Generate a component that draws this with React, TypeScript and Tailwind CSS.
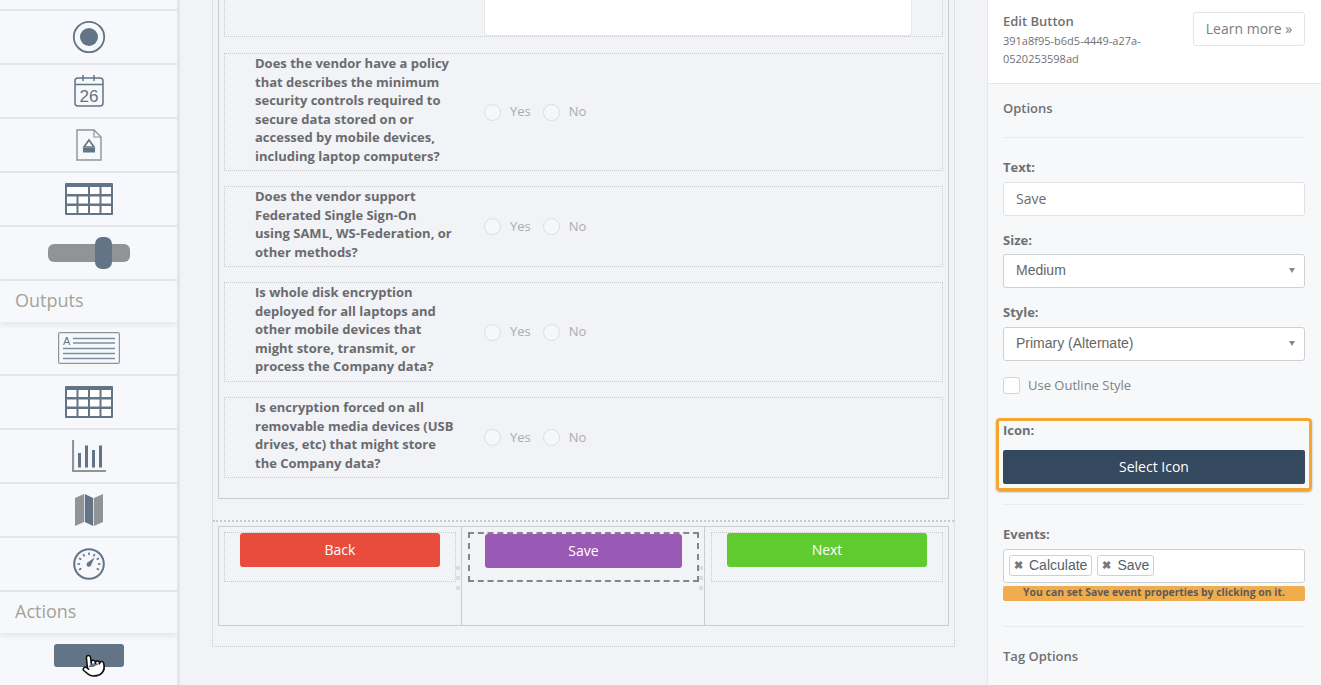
import React from "react";
import { Pointer } from "lucide-react";

const SLATE = "#637487";
const GRAY = "#929396";

const questions = [
  {
    text: "Does the vendor have a policy that describes the minimum security controls required to secure data stored on or accessed by mobile devices, including laptop computers?",
    height: "h-[118px]",
  },
  {
    text: "Does the vendor support Federated Single Sign-On using SAML, WS-Federation, or other methods?",
    height: "h-[81px]",
  },
  {
    text: "Is whole disk encryption deployed for all laptops and other mobile devices that might store, transmit, or process the Company data?",
    height: "h-[100px]",
  },
  {
    text: "Is encryption forced on all removable media devices (USB drives, etc) that might store the Company data?",
    height: "h-[81px]",
  },
];

function SideRow({ children }: { children: React.ReactNode }) {
  return (
    <div className="flex h-[54px] shrink-0 items-center justify-center border-b-2 border-[#e4e5e9]">
      {children}
    </div>
  );
}

function SideHeader({ label }: { label: string }) {
  return (
    <div className="relative z-10 flex h-[41px] shrink-0 items-center pb-[2px] pl-[15px] text-[18px] text-[#a3a399] shadow-[0_3px_6px_rgba(0,0,0,0.08)]">
      {label}
    </div>
  );
}

function RadioIcon() {
  return (
    <svg width="34" height="34" viewBox="0 0 34 34">
      <circle cx="17" cy="17" r="15.2" fill="none" stroke={SLATE} strokeWidth="1.8" />
      <circle cx="17" cy="17" r="9" fill={SLATE} />
    </svg>
  );
}

function CalendarIcon() {
  return (
    <svg width="30" height="32" viewBox="0 0 30 32">
      <rect x="1" y="3" width="28" height="28" rx="3" fill="none" stroke={SLATE} strokeWidth="1.5" />
      <path d="M1 9.5H29M9 0V6M20 0V6" stroke={SLATE} strokeWidth="1.5" />
      <text x="15" y="27" textAnchor="middle" fontSize="17" fill={SLATE} fontFamily="'Liberation Sans', sans-serif">
        26
      </text>
    </svg>
  );
}

function FileIcon() {
  return (
    <svg width="26" height="32" viewBox="0 0 26 32">
      <path d="M1 1H18L25 8V31H1Z" fill="none" stroke={GRAY} strokeWidth="1.4" />
      <path d="M18 1V8H25" fill="none" stroke={GRAY} strokeWidth="1.2" />
      <path d="M13 11L18 18H8Z" fill="none" stroke={SLATE} strokeWidth="1.6" />
      <rect x="7" y="19" width="12" height="4.5" fill={SLATE} />
    </svg>
  );
}

function GridIcon({ header }: { header?: boolean }) {
  const cols = [2, 13.5, 25, 36.5];
  const rows = [4, 13.5, 23];
  return (
    <svg width="48" height="32" viewBox="0 0 48 32">
      <rect width="48" height="32" rx="1" fill={SLATE} />
      {rows.map((y, r) =>
        cols.map((x, c) =>
          header && r === 0 && c < 2 ? null : (
            <rect key={`${r}-${c}`} x={x} y={y} width="9.5" height="7" fill="#fff" />
          )
        )
      )}
      {header ? <rect x="2" y="4" width="21" height="7" fill="#fff" /> : null}
    </svg>
  );
}

function SliderIcon() {
  return (
    <div className="relative h-[32px] w-[82px]">
      <div className="absolute top-[7px] h-[18px] w-[82px] rounded-[6px] bg-[#929396]" />
      <div className="absolute left-[47px] h-[32px] w-[17px] rounded-[7px] bg-[#637487]" />
    </div>
  );
}

function DocIcon() {
  return (
    <svg width="62" height="32" viewBox="0 0 62 32">
      <rect x="0.6" y="0.6" width="60.8" height="30.8" rx="1.5" fill="none" stroke={GRAY} strokeWidth="1.2" />
      <text x="5" y="13" fontSize="11" fill={SLATE} fontFamily="'Liberation Sans', sans-serif">
        A
      </text>
      <path d="M15 6.5H57M15 11H57" stroke="#7e8ea1" strokeWidth="1.3" />
      <path d="M5 16.5H57M5 21.5H57M5 26.5H57" stroke="#7e8ea1" strokeWidth="1.4" />
    </svg>
  );
}

function ChartIcon() {
  return (
    <svg width="34" height="32" viewBox="0 0 34 32">
      <path d="M1 0V31H34" fill="none" stroke={GRAY} strokeWidth="2.2" />
      <path d="M7.5 13V27.5M14.5 5.5V27.5M21.5 10V27.5M28.5 5.5V27.5" stroke={SLATE} strokeWidth="3" />
    </svg>
  );
}

function MapIcon() {
  return (
    <svg width="28" height="32" viewBox="0 0 28 32">
      <path d="M0 4L9 0V28L0 32Z" fill={GRAY} />
      <path d="M9.8 0L18.2 4V32L9.8 28Z" fill={SLATE} />
      <path d="M19 4L28 0V28L19 32Z" fill={GRAY} />
    </svg>
  );
}

function GaugeIcon() {
  const ticks = [-120, -90, -60, -30, 0, 30, 60, 90, 120];
  return (
    <svg width="32" height="32" viewBox="0 0 32 32">
      <circle cx="16" cy="16" r="14.8" fill="none" stroke={SLATE} strokeWidth="2" />
      {ticks.map((a) => (
        <rect key={a} x="15.2" y="4.5" width="1.6" height="2.6" fill={SLATE} transform={`rotate(${a} 16 16)`} />
      ))}
      <path d="M21.5 9.5L17.6 18L14 15Z" fill={SLATE} />
      <circle cx="15.8" cy="16.5" r="2.2" fill={SLATE} />
    </svg>
  );
}

function Sidebar() {
  return (
    <aside className="flex h-[685px] w-[180px] shrink-0 flex-col overflow-hidden border-r-[3px] border-[#e4e5e9] bg-[#f7f8fb]">
      <div className="h-[11px] shrink-0 border-b-2 border-[#e4e5e9]" />
      <SideRow><RadioIcon /></SideRow>
      <SideRow><CalendarIcon /></SideRow>
      <SideRow><FileIcon /></SideRow>
      <SideRow><GridIcon header /></SideRow>
      <SideRow><SliderIcon /></SideRow>
      <SideHeader label="Outputs" />
      <SideRow><DocIcon /></SideRow>
      <SideRow><GridIcon /></SideRow>
      <SideRow><ChartIcon /></SideRow>
      <SideRow><MapIcon /></SideRow>
      <SideRow><GaugeIcon /></SideRow>
      <SideHeader label="Actions" />
      <div className="relative flex justify-center pt-[11px]">
        <div className="h-[23px] w-[70px] rounded-[3px] bg-[#637487]" />
        <Pointer
          size={25}
          fill="#fff"
          stroke="#111"
          strokeWidth={1.5}
          className="absolute left-[81px] top-[20px] -rotate-6"
        />
      </div>
    </aside>
  );
}

function Radio({ label }: { label: string }) {
  return (
    <div className="flex items-center">
      <span className="h-[17px] w-[17px] rounded-full border border-[#dcdde0] bg-[#f6f7f9]" />
      <span className="ml-[9px] text-[13px] text-[#a9acb1]">{label}</span>
    </div>
  );
}

function Question({ text, height }: { text: string; height: string }) {
  return (
    <div className={`mb-[15px] flex items-center border border-dotted border-[#c9cacd] ${height}`}>
      <p className="ml-[30px] w-[199px] self-start text-[13px] font-bold leading-[18.5px] text-[#6b6b6e]">{text}</p>
      <div className="ml-[30px] flex gap-[12px]">
        <Radio label="Yes" />
        <Radio label="No" />
      </div>
    </div>
  );
}

function ActionCell({
  label,
  color,
  padding,
  buttonWidth = "w-[200px]",
  selected,
  handles = true,
  last,
}: {
  label: string;
  color: string;
  padding: string;
  buttonWidth?: string;
  selected?: boolean;
  handles?: boolean;
  last?: boolean;
}) {
  return (
    <div className={`relative w-[243px] pt-[5px] ${padding} ${last ? "" : "border-r border-[#cbccd0]"}`}>
      <div
        className={`flex h-[50px] items-start justify-center ${
          selected ? "border-2 border-dashed border-[#85868a]" : "border border-dotted border-[#c9cacd]"
        }`}
      >
        <button className={`h-[34px] rounded-[3px] pb-[2px] text-[14px] text-white ${buttonWidth} ${color}`}>
          {label}
        </button>
      </div>
      {handles ? (
        <div className="absolute right-[1px] top-[39px] flex flex-col gap-[6px]">
          <span className="h-[4px] w-[4px] bg-[#dcdcde]" />
          <span className="h-[4px] w-[4px] bg-[#dcdcde]" />
          <span className="h-[4px] w-[4px] bg-[#dcdcde]" />
        </div>
      ) : null}
    </div>
  );
}

function Canvas() {
  return (
    <main className="h-[685px] w-[807px] shrink-0 overflow-hidden pl-[32px]">
      <div className="w-[743px] border-x border-b border-dotted border-[#c9cacd] px-[5px] pb-[20px]">
        <div className="border-x border-b border-[#cbccd0] px-[5px] pb-[5px]">
          <div className="mb-[16px] h-[37px] border border-t-0 border-dotted border-[#c9cacd] pl-[259px]">
            <div className="h-[36px] w-[428px] rounded-b-[3px] border border-t-0 border-[#e6e7ea] bg-white" />
          </div>
          {questions.map((q) => (
            <Question key={q.text} text={q.text} height={q.height} />
          ))}
        </div>
        <div className="-mx-[5px] mt-[21px] border-t-2 border-dotted border-[#c9cacd] px-[5px] pt-[4px]">
          <div className="flex h-[100px] w-[731px] border border-[#cbccd0]">
            <ActionCell label="Back" color="bg-[#e74c3c]" padding="pl-[5px] pr-[5px]" />
            <ActionCell
              label="Save"
              color="bg-[#9b59b6]"
              padding="pl-[6px] pr-[5px]"
              buttonWidth="w-[197px]"
              selected
            />
            <ActionCell label="Next" color="bg-[#5fcb2e]" padding="pl-[6px] pr-[5px]" handles={false} last />
          </div>
        </div>
      </div>
    </main>
  );
}

function Label({ children }: { children: React.ReactNode }) {
  return <div className="text-[13px] font-bold leading-[18px] text-[#6f7073]">{children}</div>;
}

function SelectBox({ value, gap }: { value: string; gap: string }) {
  return (
    <div
      className={`flex h-[34px] items-center justify-between rounded-[3px] border border-[#cfd0d3] bg-white pb-[2px] pl-[12px] pr-[9px] font-['Liberation_Sans',sans-serif] text-[14px] text-[#666] ${gap}`}
    >
      {value}
      <span className="h-0 w-0 border-x-[3px] border-t-[5px] border-x-transparent border-t-[#888]" />
    </div>
  );
}

function Chip({ label }: { label: string }) {
  return (
    <span className="flex h-[21px] items-center rounded-[3px] border border-[#cfd0d3] px-[4px] font-['Liberation_Sans',sans-serif] text-[14px] text-[#555f6c]">
      <span className="mr-[6px] text-[11px] font-bold text-[#777]">✖</span>
      {label}
    </span>
  );
}

function Inspector() {
  return (
    <aside className="h-[685px] flex-1 overflow-hidden border-l border-[#e6e7ea] bg-[#f7f8fa]">
      <header className="flex h-[84px] justify-between border-b border-[#e6e7ea] bg-white pl-[15px] pr-[16px] pt-[12px]">
        <div>
          <div className="text-[13px] font-semibold leading-[18px] text-[#6f7073]">Edit Button</div>
          <div className="mt-[2px] w-[170px] text-[11px] leading-[18px] text-[#6f7073]">
            391a8f95-b6d5-4449-a27a-0520253598ad
          </div>
        </div>
        <button className="h-[34px] w-[112px] rounded-[3px] border border-[#e4e5e8] bg-white pb-[2px] text-[14px] text-[#7c7c7f]">
          Learn more »
        </button>
      </header>
      <div className="pl-[15px] pr-[16px]">
        <div className="flex h-[54px] items-end border-b border-[#ebecee] pb-[19px] text-[13px] font-semibold text-[#6f7073]">
          Options
        </div>
        <div className="mt-[20px]">
          <Label>Text:</Label>
          <input
            readOnly
            value="Save"
            className="mt-[6px] block h-[34px] w-full rounded-[3px] border border-[#e1e2e5] bg-white px-[12px] pb-[2px] text-[14px] text-[#6b6b6e]"
          />
        </div>
        <div className="mt-[15px]">
          <Label>Size:</Label>
          <SelectBox value="Medium" gap="mt-[5px]" />
        </div>
        <div className="mt-[15px]">
          <Label>Style:</Label>
          <SelectBox value="Primary (Alternate)" gap="mt-[6px]" />
        </div>
        <div className="mt-[15px] flex items-center">
          <span className="h-[17px] w-[17px] rounded-[3px] border border-[#d4d5d8] bg-white" />
          <span className="ml-[8px] text-[13px] text-[#808184]">Use Outline Style</span>
        </div>
        <div className="-mx-[7px] mt-[22px] rounded-[4px] border-[3px] border-[#f5a630] px-[4px] pb-[4px] shadow-[0_1px_2px_rgba(0,0,0,0.35)]">
          <Label>Icon:</Label>
          <button className="mt-[11px] h-[34px] w-full rounded-[2px] bg-[#34495e] text-[14px] text-white">
            Select Icon
          </button>
        </div>
        <div className="mt-[13px] border-t border-[#ebecee] pt-[20px]">
          <Label>Events:</Label>
          <div className="mt-[6px] flex h-[34px] items-center gap-[5px] rounded-[3px] border border-[#cfd0d3] bg-white px-[5px]">
            <Chip label="Calculate" />
            <Chip label="Save" />
          </div>
          <div className="mt-[3px] flex h-[15px] items-center justify-center rounded-[2px] bg-[#f0ad4e] text-[10.4px] font-bold text-[#5d5a56]">
            You can set Save event properties by clicking on it.
          </div>
        </div>
        <div className="mt-[25px] border-t border-[#ebecee] pt-[20px] text-[13px] font-semibold text-[#6f7073]">
          Tag Options
        </div>
      </div>
    </aside>
  );
}

export default function App() {
  return (
    <div className="flex h-[685px] w-[1321px] overflow-hidden bg-[#f1f3f7] font-['Open_Sans',sans-serif]">
      <Sidebar />
      <Canvas />
      <Inspector />
    </div>
  );
}
